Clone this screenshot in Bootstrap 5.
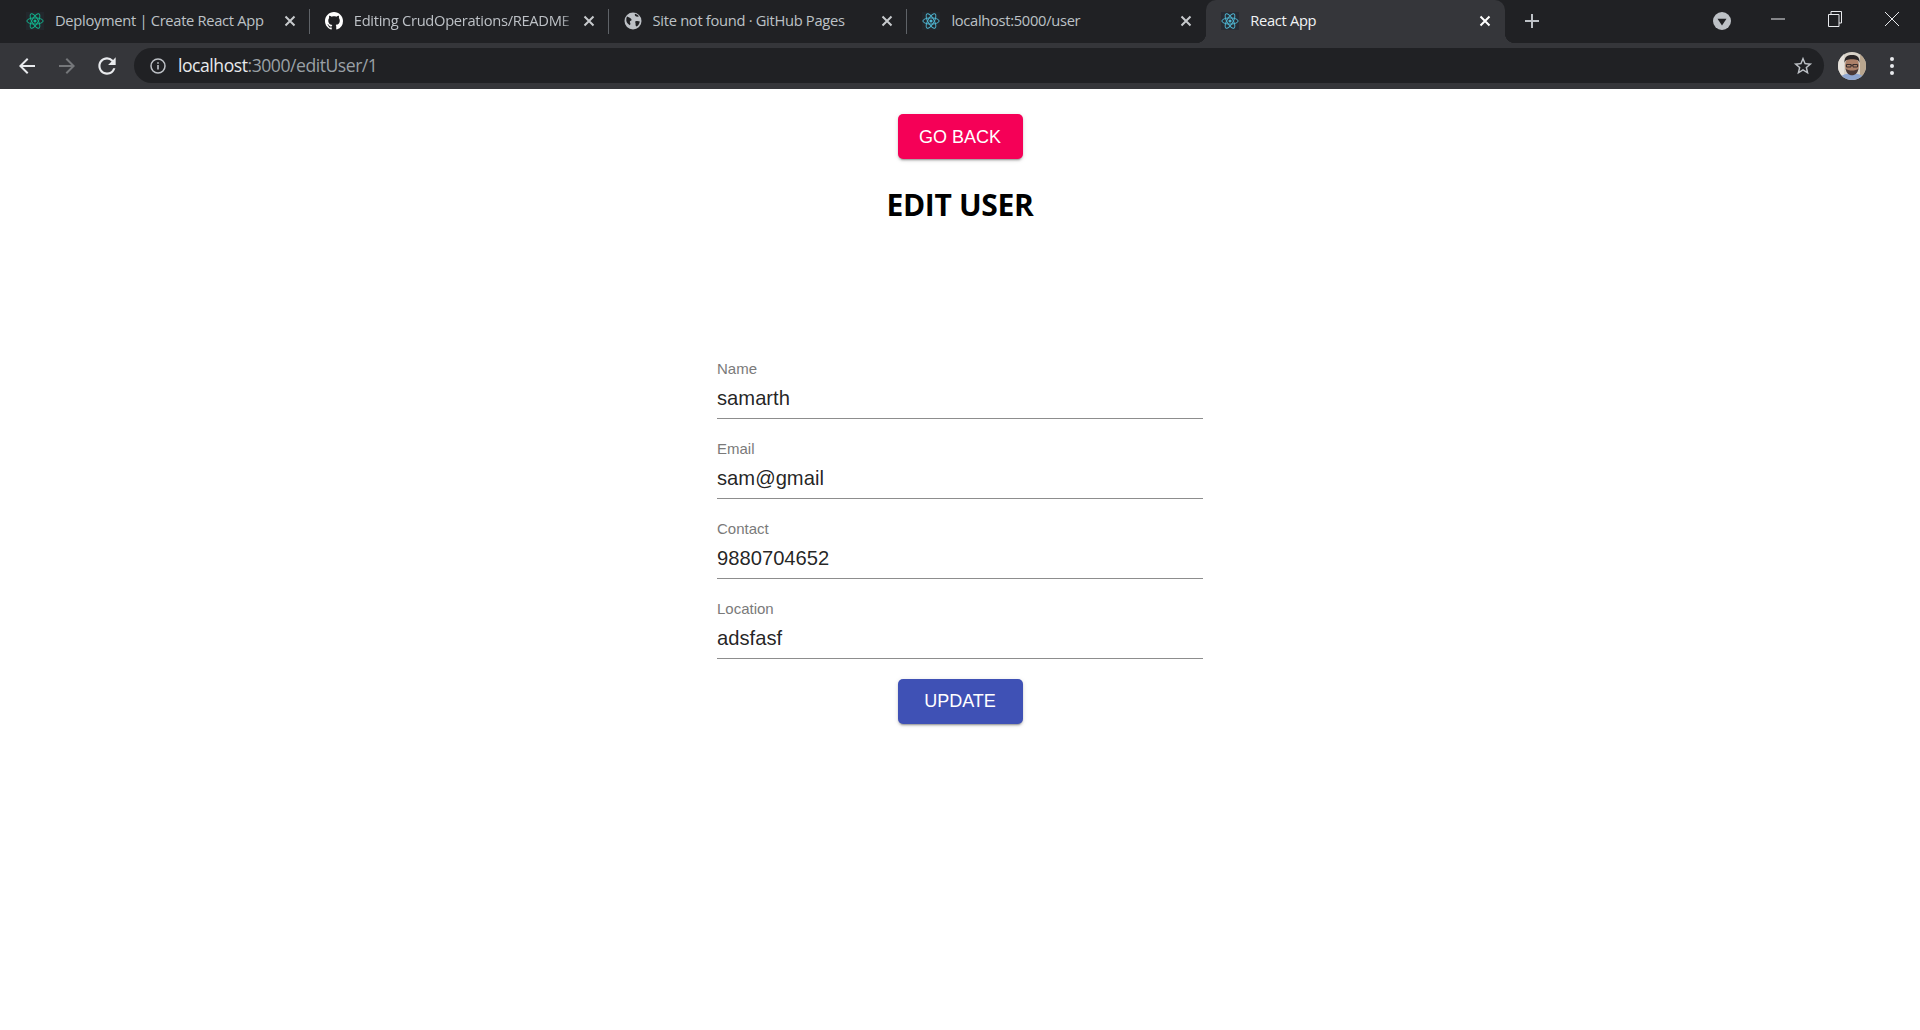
<!DOCTYPE html>
<html lang="en">
<head>
    <meta charset="UTF-8">
    <meta name="viewport" content="width=device-width, initial-scale=1.0">
    <title>React App</title>
    <link href="https://cdn.jsdelivr.net/npm/bootstrap@5.3.0/dist/css/bootstrap.min.css" rel="stylesheet">
    <style>
        body { background: #fff; height: 1030px; overflow: hidden; font-family: "Liberation Sans", Arial, sans-serif; }

        /* browser chrome */
        .tabstrip { height: 43px; background: #202124; padding-left: 11px; }
        .tab { width: 298.8px; height: 43px; padding: 0 14px 2px 15px; position: relative; color: #bdc1c6; flex: none; }
        .tab + .tab::before { content: ""; position: absolute; left: -1px; top: 9px; height: 25px; width: 1px; background: #5f6368; }
        .tab.active { background: #35363a; color: #f1f3f4; border-radius: 10px 10px 0 0; }
        .tab.active::before { display: none; }
        .tab.active::after { content: ""; position: absolute; right: -10px; bottom: 0; width: 10px; height: 10px;
            background: radial-gradient(circle at 100% 0, transparent 10px, #35363a 10.5px); }
        .tab.before-active .flare { position: absolute; right: 0; bottom: 0; width: 10px; height: 10px;
            background: radial-gradient(circle at 0 0, transparent 10px, #35363a 10.5px); }
        .tab-icon { width: 18px; height: 18px; flex: none; margin-right: 11px; }
        .tab-title { flex: 1; min-width: 0; white-space: nowrap; overflow: hidden; font: 14.7px "Open Sans", sans-serif; letter-spacing: -0.3px; padding-bottom: 1px; }
        .tab-title.fade-out { -webkit-mask-image: linear-gradient(to right, #000 calc(100% - 14px), transparent); mask-image: linear-gradient(to right, #000 calc(100% - 14px), transparent); }
        .tab-close { width: 12px; height: 12px; flex: none; margin: 0 0 0 8px; }
        .new-tab { width: 54px; height: 41px; align-self: flex-start; }
        .win-btn { width: 57px; height: 38px; }
        .profile-menu { width: 54px; height: 41px; }

        .toolbar { height: 46px; background: #35363a; padding: 0 0 1px 7px; }
        .tool-btn { width: 40px; height: 40px; flex: none; }
        .omnibox { height: 35px; width: 1690px; margin-left: 7px; background: #202124; border-radius: 18px; padding: 0 10px 0 16px; }
        .omni-url { font: 17.6px "Open Sans", sans-serif; letter-spacing: -0.47px; color: #9aa0a6; margin-left: 12px; line-height: 34px; height: 35px; }
        .omni-url b { font-weight: 400; color: #e8eaed; }
        .avatar { width: 28px; height: 28px; margin-left: 14px; }
        .dots { margin-left: 23px; }

        /* page */
        .mui-btn { width: 125px; height: 45px; border: 0; border-radius: 5px; color: #fff; font: 400 18px "Liberation Sans", Arial, sans-serif;
            box-shadow: 0 3px 1px -2px rgba(0,0,0,.2), 0 2px 2px 0 rgba(0,0,0,.14), 0 1px 5px 0 rgba(0,0,0,.12); }
        .btn-pink { background: #f50057; margin-top: 25px; padding-top: 2px; }
        .btn-indigo { background: #3f51b5; margin-top: -2px; }
        .page-title { font: 700 30px "Open Sans", sans-serif; color: #000; margin: 26px 0 0; letter-spacing: -0.3px; line-height: 40px; }
        .edit-form { width: 486px; margin-top: 136px; }
        .field { height: 80px; }
        .field label { font: 15px "Liberation Sans", Arial, sans-serif; color: #7a7a7a; display: block; line-height: 15px; }
        .field input { border: 0; border-bottom: 1px solid #8d8d8d; border-radius: 0; padding: 2px 0 6px; height: 36px;
            font: 20.2px "Liberation Sans", Arial, sans-serif; color: rgba(0,0,0,.87); background: none; margin-top: 7px; }
    </style>
</head>
<body>

<div class="tabstrip d-flex align-items-center">
    <div class="tab d-flex align-items-center">
        <svg class="tab-icon" viewBox="0 0 18 18"><rect width="18" height="18" fill="#22272c"/><g transform="translate(9 9) scale(.74)" fill="none" stroke="#12b38d" stroke-width="1.3"><circle r="2.1" fill="#12b38d" stroke="none"/><ellipse rx="11" ry="4.2"/><ellipse rx="11" ry="4.2" transform="rotate(60)"/><ellipse rx="11" ry="4.2" transform="rotate(120)"/></g></svg>
        <span class="tab-title">Deployment | Create React App</span>
        <svg class="tab-close" viewBox="0 0 12 12"><path d="M1.5 1.5l9 9M10.5 1.5l-9 9" stroke="#c7cacd" stroke-width="2"/></svg>
    </div>
    <div class="tab d-flex align-items-center">
        <svg class="tab-icon" viewBox="0 0 16 16"><path fill="#fff" d="M8 0C3.58 0 0 3.58 0 8c0 3.54 2.29 6.53 5.47 7.59.4.07.55-.17.55-.38 0-.19-.01-.82-.01-1.49-2.01.37-2.53-.49-2.69-.94-.09-.23-.48-.94-.82-1.13-.28-.15-.68-.52-.01-.53.63-.01 1.08.58 1.23.82.72 1.21 1.87.87 2.33.66.07-.52.28-.87.51-1.07-1.78-.2-3.64-.89-3.64-3.95 0-.87.31-1.59.82-2.15-.08-.2-.36-1.02.08-2.12 0 0 .67-.21 2.2.82.64-.18 1.32-.27 2-.27.68 0 1.36.09 2 .27 1.53-1.04 2.2-.82 2.2-.82.44 1.1.16 1.92.08 2.12.51.56.82 1.27.82 2.15 0 3.07-1.87 3.75-3.65 3.95.29.25.54.73.54 1.48 0 1.07-.01 1.93-.01 2.2 0 .21.15.46.55.38A8.013 8.013 0 0016 8c0-4.42-3.58-8-8-8z"/></svg>
        <span class="tab-title fade-out">Editing CrudOperations/README</span>
        <svg class="tab-close" viewBox="0 0 12 12"><path d="M1.5 1.5l9 9M10.5 1.5l-9 9" stroke="#c7cacd" stroke-width="2"/></svg>
    </div>
    <div class="tab d-flex align-items-center">
        <svg class="tab-icon" viewBox="0 0 18 18"><circle cx="9" cy="9" r="8.5" fill="#bdc1c6"/><path fill="#202124" d="M3 4.5c1.5.5 3 1.2 4 2.2.8.8.7 1.7-.2 2.1-.9.4-1.2 1.2-.7 2 .4.7.4 1.7-.2 2.4C4 12.300 2.500 10.500 2.300 8.500c-.1-1.500.1-2.900.7-4zM11 1.800c1.700.4 3 1.300 4 2.500-1 .5-2.400.6-3.300 0-.8-.5-1.100-1.500-.7-2.500zM11.500 9.300c1.300-.5 3.200-.4 4.300.2-.3 2.200-1.500 4-3.300 5.100-.8-.5-1.100-1.500-.9-2.500.1-.8-.9-2.200-.1-2.800z"/></svg>
        <span class="tab-title">Site not found · GitHub Pages</span>
        <svg class="tab-close" viewBox="0 0 12 12"><path d="M1.5 1.5l9 9M10.500 1.5l-9 9" stroke="#c7cacd" stroke-width="2"/></svg>
    </div>
    <div class="tab before-active d-flex align-items-center">
        <svg class="tab-icon" viewBox="0 0 18 18"><rect width="18" height="18" fill="#22272c"/><g transform="translate(9 9) scale(.74)" fill="none" stroke="#4fb6d2" stroke-width="1.3"><circle r="2.1" fill="#4fb6d2" stroke="none"/><ellipse rx="11" ry="4.2"/><ellipse rx="11" ry="4.2" transform="rotate(60)"/><ellipse rx="11" ry="4.2" transform="rotate(120)"/></g></svg>
        <span class="tab-title">localhost:5000/user</span>
        <svg class="tab-close" viewBox="0 0 12 12"><path d="M1.5 1.5l9 9M10.500 1.5l-9 9" stroke="#c7cacd" stroke-width="2"/></svg>
        <span class="flare"></span>
    </div>
    <div class="tab active d-flex align-items-center">
        <svg class="tab-icon" viewBox="0 0 18 18"><rect width="18" height="18" fill="#282c34"/><g transform="translate(9 9) scale(.74)" fill="none" stroke="#4fb6d2" stroke-width="1.3"><circle r="2.1" fill="#4fb6d2" stroke="none"/><ellipse rx="11" ry="4.2"/><ellipse rx="11" ry="4.2" transform="rotate(60)"/><ellipse rx="11" ry="4.2" transform="rotate(120)"/></g></svg>
        <span class="tab-title">React App</span>
        <svg class="tab-close" viewBox="0 0 12 12"><path d="M1.5 1.5l9 9M10.500 1.5l-9 9" stroke="#fff" stroke-width="2"/></svg>
    </div>
    <div class="new-tab d-flex align-items-center justify-content-center">
        <svg width="16" height="16" viewBox="0 0 16 16"><path d="M8 1v14M1 8h14" stroke="#bdc1c6" stroke-width="2"/></svg>
    </div>
    <div class="profile-menu ms-auto d-flex align-items-center justify-content-center align-self-start">
        <svg width="18" height="18" viewBox="0 0 18 18"><circle cx="9" cy="9" r="9" fill="#bdc1c6"/><path d="M4.500 6.800h9L9 13.500z" fill="#202124"/></svg>
    </div>
    <div class="win-btn d-flex align-items-center justify-content-center align-self-start">
        <svg width="14" height="14" viewBox="0 0 14 14"><path d="M0 7h14" stroke="#e8eaed" stroke-width="1"/></svg>
    </div>
    <div class="win-btn d-flex align-items-center justify-content-center align-self-start">
        <svg width="14" height="16" viewBox="0 0 14 16"><path d="M.5 3.500h10.500v12H.500zM3 3.500V.500h10.500v11.500H11" fill="none" stroke="#e8eaed" stroke-width="1"/></svg>
    </div>
    <div class="win-btn d-flex align-items-center justify-content-center align-self-start">
        <svg width="16" height="16" viewBox="0 0 16 16"><path d="M1 1l14 14M15 1L1 15" stroke="#e8eaed" stroke-width="1"/></svg>
    </div>
</div>

<div class="toolbar d-flex align-items-center">
    <div class="tool-btn d-flex align-items-center justify-content-center">
        <svg width="24" height="24" viewBox="0 0 24 24"><path fill="#e8eaed" d="M20 11H7.830l5.590-5.590L12 4l-8 8 8 8 1.410-1.410L7.830 13H20v-2z"/></svg>
    </div>
    <div class="tool-btn d-flex align-items-center justify-content-center">
        <svg width="24" height="24" viewBox="0 0 24 24"><path fill="#75777a" d="M12 4l-1.410 1.410L16.170 11H4v2h12.170l-5.580 5.590L12 20l8-8z"/></svg>
    </div>
    <div class="tool-btn d-flex align-items-center justify-content-center">
        <svg width="26" height="26" viewBox="0 0 24 24"><path fill="#e8eaed" d="M17.650 6.350A7.958 7.958 0 0 0 12 4c-4.420 0-7.990 3.580-7.990 8s3.570 8 7.990 8c3.730 0 6.840-2.550 7.730-6h-2.080A5.990 5.990 0 0 1 12 18c-3.310 0-6-2.690-6-6s2.690-6 6-6c1.660 0 3.140.690 4.220 1.780L13 11h7V4l-2.350 2.350z"/></svg>
    </div>
    <div class="omnibox d-flex align-items-center">
        <svg width="16" height="16" viewBox="0 0 16 16"><circle cx="8" cy="8" r="7" fill="none" stroke="#bdc1c6" stroke-width="1.500"/><path d="M8 7v4.500M8 4.300v1.400" stroke="#bdc1c6" stroke-width="1.600"/></svg>
        <span class="omni-url"><b>localhost</b>:3000/editUser/1</span>
        <svg class="ms-auto" width="22" height="22" viewBox="0 0 24 24"><path fill="#bdc1c6" d="M22 9.240l-7.190-.620L12 2 9.190 8.630 2 9.240l5.460 4.730L5.820 21 12 17.270 18.180 21l-1.630-7.030L22 9.240zM12 15.400l-3.760 2.270 1-4.280-3.320-2.880 4.380-.380L12 6.100l1.710 4.040 4.380.380-3.320 2.880 1 4.280L12 15.400z"/></svg>
    </div>
    <svg class="avatar" viewBox="0 0 28 28">
        <clipPath id="face"><circle cx="14" cy="14" r="14"/></clipPath>
        <g clip-path="url(#face)">
            <rect width="28" height="28" fill="#d8d2c8"/>
            <path d="M0 0h6v28H0z" fill="#e6e2dc"/>
            <path d="M22 0h6v28h-6z" fill="#b9a68e"/>
            <path d="M1 28c1-5 6-6.500 13-6.500S26 23 27 28z" fill="#8ea6d0"/>
            <ellipse cx="14" cy="13.500" rx="7" ry="9" fill="#ab8069"/>
            <path d="M6.500 11C6 4.500 10 3 14 3s8 1.500 7.500 8c-.8-3-2.500-3.800-7.500-3.800S7.300 8 6.500 11z" fill="#2a2526"/>
            <path d="M7.500 16.500c1 5.500 4 6.800 6.500 6.800s5.500-1.300 6.500-6.800c-1.500 1.500-4 2-6.500 2s-5-.5-6.500-2z" fill="#4a3a38"/>
            <path d="M8.500 12.500h4.500v2.500H8.500zM15 12.500h4.500v2.500H15zM13 13.200h2" fill="none" stroke="#2a2526" stroke-width=".9"/>
        </g>
    </svg>
    <svg class="dots" width="6" height="20" viewBox="0 0 6 20"><circle cx="3" cy="3" r="2" fill="#e8eaed"/><circle cx="3" cy="10" r="2" fill="#e8eaed"/><circle cx="3" cy="17" r="2" fill="#e8eaed"/></svg>
</div>

<main class="d-flex flex-column align-items-center">
    <button type="button" class="mui-btn btn-pink">GO BACK</button>
    <h2 class="page-title">EDIT USER</h2>
    <form class="edit-form d-flex flex-column align-items-center">
        <div class="field w-100">
            <label for="name">Name</label>
            <input id="name" class="form-control" value="samarth">
        </div>
        <div class="field w-100">
            <label for="email">Email</label>
            <input id="email" class="form-control" value="sam@gmail">
        </div>
        <div class="field w-100">
            <label for="contact">Contact</label>
            <input id="contact" class="form-control" value="9880704652">
        </div>
        <div class="field w-100">
            <label for="location">Location</label>
            <input id="location" class="form-control" value="adsfasf">
        </div>
        <button type="button" class="mui-btn btn-indigo">UPDATE</button>
    </form>
</main>

<script src="https://cdn.jsdelivr.net/npm/bootstrap@5.3.0/dist/js/bootstrap.bundle.min.js"></script>
</body>
</html>
